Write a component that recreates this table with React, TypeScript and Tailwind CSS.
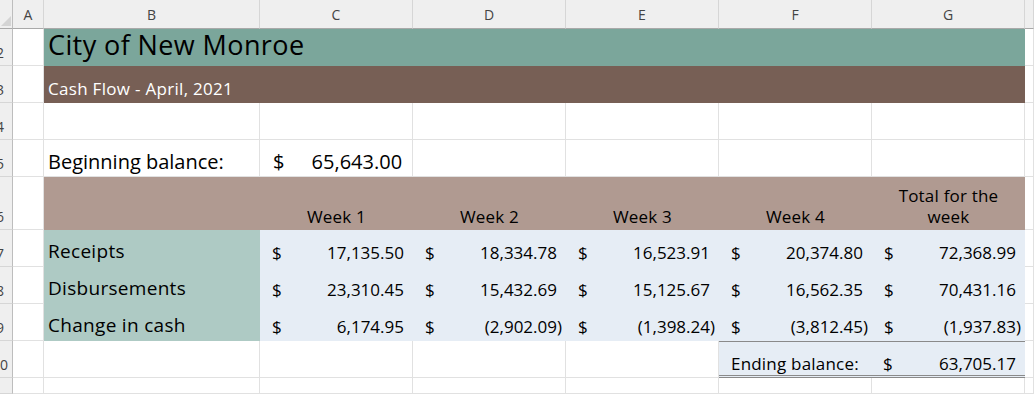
import clsx from "clsx";

const FONT = "font-['Open_Sans','Noto_Sans',sans-serif]";

const cols = ["A", "B", "C", "D", "E", "F", "G", ""];

type Row = { label: string; values: number[] };

const rows: Row[] = [
  { label: "Receipts", values: [17135.5, 18334.78, 16523.91, 20374.8, 72368.99] },
  { label: "Disbursements", values: [23310.45, 15432.69, 15125.67, 16562.35, 70431.16] },
  { label: "Change in cash", values: [6174.95, -2902.09, -1398.24, -3812.45, -1937.83] },
];

function fmt(n: number) {
  return Math.abs(n).toLocaleString("en-US", { minimumFractionDigits: 2, maximumFractionDigits: 2 });
}

// only the right half of the row header is on screen, like a scrolled sheet
function RowHead({ n }: { n?: number }) {
  return (
    <div className="relative overflow-hidden bg-[#efefef] border-r border-b border-r-[#bdbdbd] border-b-[#d6d6d6]">
      <div className="absolute left-[-13px] top-0 bottom-0 w-[26px] flex items-end justify-center pb-[5px] text-[14px] leading-none text-[#444]">
        {n}
      </div>
    </div>
  );
}

function Plain({ className, children }: { className?: string; children?: React.ReactNode }) {
  return <div className={clsx("border-r border-b border-[#e1e1e1]", className)}>{children}</div>;
}

function Money({ value, bg }: { value: number; bg: string }) {
  const neg = value < 0;
  return (
    <div className={clsx("flex items-end justify-between pl-3 pr-1 pb-[6px] text-[17px] leading-none text-black", bg)}>
      <span>$</span>
      <span>
        {neg ? "(" : ""}
        {fmt(value)}
        <span className={neg ? "" : "invisible"}>)</span>
      </span>
    </div>
  );
}

export default function App() {
  const blue = "bg-[#e6edf5]";
  return (
    <div
      className={clsx(
        "grid w-[1034px] h-[394px] overflow-hidden bg-white",
        "grid-cols-[13px_31px_216px_153px_153px_153px_153px_153px_9px]",
        "grid-rows-[29px_37px_37px_37px_37px_53px_37px_37px_37px_37px_16px]",
        FONT
      )}
    >
      {/* column headers */}
      <div className="relative bg-[#efefef] border-r border-b border-r-[#bdbdbd] border-b-[#a9a9a9]">
        <svg className="absolute right-[1px] bottom-[2px]" width="10" height="10" viewBox="0 0 10 10">
          <polygon points="10,0 10,10 0,10" fill="#d4d4d4" />
        </svg>
      </div>
      {cols.map((c, i) => (
        <div
          key={i}
          className="flex items-center justify-center bg-[#efefef] border-r border-b border-r-[#d6d6d6] border-b-[#a9a9a9] text-[14px] text-[#444]"
        >
          {c}
        </div>
      ))}

      {/* row 2 */}
      <RowHead n={2} />
      <Plain />
      <div className="col-span-6 flex items-end bg-[#7ba69b] pl-1 pb-[8px] text-[27px] leading-none tracking-[0.4px] text-black">
        City of New Monroe
      </div>
      <Plain />

      {/* row 3 */}
      <RowHead n={3} />
      <Plain />
      <div className="col-span-6 flex items-end bg-[#775f55] pl-1 pb-[6px] text-[17px] leading-none tracking-[0.3px] text-white">
        Cash Flow - April, 2021
      </div>
      <Plain />

      {/* row 4 */}
      <RowHead n={4} />
      {cols.map((c, i) => (
        <Plain key={i} />
      ))}

      {/* row 5 */}
      <RowHead n={5} />
      <Plain />
      <Plain className="flex items-end pl-1 pb-[4px] text-[20px] leading-none text-black">Beginning balance:</Plain>
      <div className="flex items-end justify-between border-r border-b border-[#e1e1e1] pl-[13px] pr-1 pb-[4px] text-[20px] leading-none text-black">
        <span>$</span>
        <span>
          65,643.00<span className="invisible">)</span>
        </span>
      </div>
      <Plain />
      <Plain />
      <Plain />
      <Plain />
      <Plain />

      {/* row 6 */}
      <RowHead n={6} />
      <Plain />
      <div className="bg-[#b09a91]" />
      {["Week 1", "Week 2", "Week 3", "Week 4"].map((w) => (
        <div key={w} className="flex items-end justify-center bg-[#b09a91] pb-[5px] text-[17px] leading-none tracking-[0.2px] text-black">
          {w}
        </div>
      ))}
      <div className="flex flex-col items-center justify-end bg-[#b09a91] pb-[5px] text-[17px] tracking-[0.2px] text-black">
        <span className="leading-[25px]">Total for the</span>
        <span className="leading-none">week</span>
      </div>
      <Plain />

      {/* rows 7-9 */}
      {rows.map((r, idx) => (
        <div key={r.label} className="contents">
          <RowHead n={7 + idx} />
          <Plain />
          <div className="flex items-end bg-[#aecac4] pl-1 pb-[6px] text-[19px] leading-none tracking-[0.3px] text-black">
            {r.label}
          </div>
          {r.values.map((v, j) => (
            <Money key={j} value={v} bg={blue} />
          ))}
          <Plain />
        </div>
      ))}

      {/* row 10 */}
      <RowHead n={10} />
      <Plain />
      <Plain />
      <Plain />
      <Plain />
      <Plain />
      <div
        className={clsx(
          "flex items-end pl-3 pb-[3px] text-[17px] leading-none tracking-[0.2px] text-black border-t border-t-[#8a8a8a] border-b-[3px] border-double border-b-[#8a8a8a]",
          blue
        )}
      >
        Ending balance:
      </div>
      <div
        className={clsx(
          "flex items-end justify-between pl-[11px] pr-1 pb-[3px] text-[17px] leading-none text-black border-t border-t-[#8a8a8a] border-b-[3px] border-double border-b-[#8a8a8a]",
          blue
        )}
      >
        <span>$</span>
        <span>
          63,705.17<span className="invisible">)</span>
        </span>
      </div>
      <Plain />

      {/* row 11, its number sits below the visible area */}
      <RowHead />
      {cols.map((c, i) => (
        <Plain key={i} />
      ))}
    </div>
  );
}
